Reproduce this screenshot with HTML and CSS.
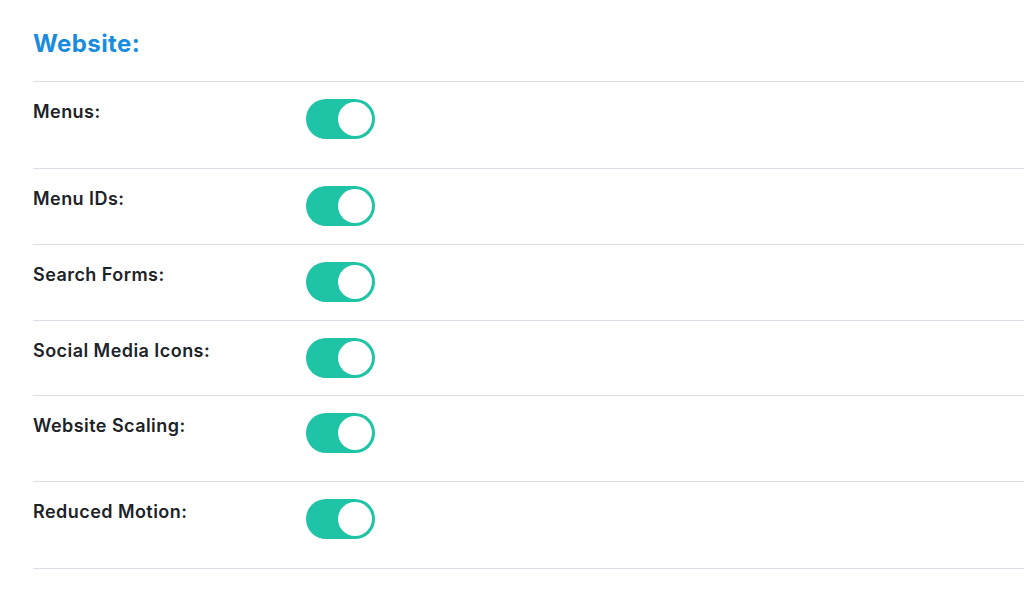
FILE: index.html
```html
<!DOCTYPE html>
<html lang="en">
<head>
<meta charset="utf-8">
<title>Website settings</title>
<link rel="stylesheet" href="styles.css">
</head>
<body>
<main class="page">
  <h2 class="section-title">Website:</h2>
  <div class="settings">
    <div class="row row-tall">
      <div class="label">Menus:</div>
      <span class="toggle on"><span class="knob"></span></span>
    </div>
    <div class="row">
      <div class="label">Menu IDs:</div>
      <span class="toggle on"><span class="knob"></span></span>
    </div>
    <div class="row">
      <div class="label">Search Forms:</div>
      <span class="toggle on"><span class="knob"></span></span>
    </div>
    <div class="row row-short">
      <div class="label">Social Media Icons:</div>
      <span class="toggle on"><span class="knob"></span></span>
    </div>
    <div class="row row-mid">
      <div class="label">Website Scaling:</div>
      <span class="toggle on"><span class="knob"></span></span>
    </div>
    <div class="row row-tall">
      <div class="label">Reduced Motion:</div>
      <span class="toggle on"><span class="knob"></span></span>
    </div>
  </div>
</main>
</body>
</html>
```

FILE: styles.css
```css
html, body {
  margin: 0;
  padding: 0;
  background: #ffffff;
}

body {
  font-family: Inter, "Liberation Sans", Arial, sans-serif;
  color: #1d2327;
  overflow: hidden;
}

.page {
  padding: 29px 0 0 33px;
}

.section-title {
  margin: 0 0 22px 0;
  font-size: 24px;
  line-height: 30px;
  font-weight: 700;
  color: #1a8ce0;
  letter-spacing: 0.4px;
}

.settings {
  border-bottom: 1px solid #dcdde8;
}

.row {
  display: flex;
  align-items: flex-start;
  border-top: 1px solid #dcdde8;
  padding: 17px 0 18px 0;
}

.row-short {
  padding-bottom: 17px;
}

.row-mid {
  padding-bottom: 28px;
}

.row-tall {
  padding-bottom: 29px;
}

.label {
  width: 273px;
  flex: none;
  font-size: 18px;
  line-height: 24px;
  font-weight: 600;
  letter-spacing: 0.45px;
  margin-top: 1px;
}

.toggle {
  position: relative;
  display: block;
  width: 69px;
  height: 40px;
  border-radius: 20px;
  background: #1fc3a6;
  flex: none;
}

.knob {
  position: absolute;
  top: 3px;
  right: 3px;
  width: 34px;
  height: 34px;
  border-radius: 50%;
  background: #ffffff;
}
```
